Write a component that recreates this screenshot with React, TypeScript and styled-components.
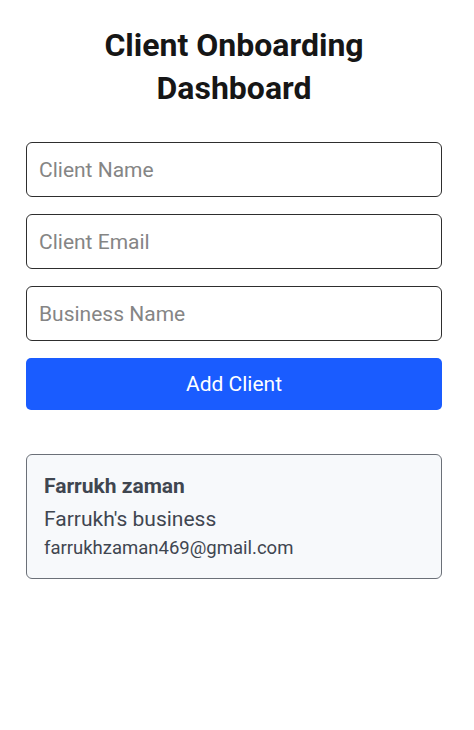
import styled, { createGlobalStyle } from 'styled-components'

const GlobalStyle = createGlobalStyle`
  body {
    margin: 0;
    background: #ffffff;
    font-family: Roboto, "Noto Sans", Arial, sans-serif;
  }
`

type Client = {
  name: string
  business: string
  email: string
}

const clients: Client[] = [
  { name: 'Farrukh zaman', business: "Farrukh's business", email: 'farrukhzaman469@gmail.com' },
]

export default function App() {
  return (
    <>
      <GlobalStyle />
      <Page>
        <Title>Client Onboarding Dashboard</Title>
        <Form onSubmit={(e) => e.preventDefault()}>
          <Field placeholder="Client Name" />
          <Field placeholder="Client Email" />
          <Field placeholder="Business Name" />
          <SubmitButton type="submit">Add Client</SubmitButton>
        </Form>
        <ClientList>
          {clients.map((c) => (
            <ClientCard key={c.email}>
              <ClientName>{c.name}</ClientName>
              <ClientBusiness>{c.business}</ClientBusiness>
              <ClientEmail>{c.email}</ClientEmail>
            </ClientCard>
          ))}
        </ClientList>
      </Page>
    </>
  )
}

const Page = styled.div`
  padding: 24px 32px 40px 26px;
  display: flex;
  flex-direction: column;
`

const Title = styled.h1`
  margin: 0 auto 32px;
  max-width: 320px;
  text-align: center;
  font-size: 32px;
  line-height: 43px;
  font-weight: 700;
  color: #161616;
`

const Form = styled.form`
  display: flex;
  flex-direction: column;
  gap: 17px;
`

const Field = styled.input`
  box-sizing: border-box;
  width: 100%;
  height: 55px;
  padding: 0 12px;
  border: 1.5px solid #2e2e2e;
  border-radius: 6px;
  font-family: Roboto, sans-serif;
  font-size: 21px;
  color: #222;
  outline: none;

  &::placeholder {
    color: #858585;
  }
`

const SubmitButton = styled.button`
  height: 52px;
  border: none;
  border-radius: 5px;
  background: #1a5cff;
  color: #ffffff;
  font-family: Roboto, sans-serif;
  font-size: 21px;
  cursor: pointer;
`

const ClientList = styled.div`
  margin-top: 44px;
  display: flex;
  flex-direction: column;
  gap: 16px;
`

const ClientCard = styled.div`
  box-sizing: border-box;
  padding: 16px 17px 18px;
  background: #f7f9fb;
  border: 1.5px solid #6b7078;
  border-radius: 6px;
  color: #3f4650;
`

const ClientName = styled.div`
  font-size: 21px;
  font-weight: 700;
  line-height: 31px;
`

const ClientBusiness = styled.div`
  font-size: 21px;
  line-height: 34px;
`

const ClientEmail = styled.div`
  font-size: 18.5px;
  line-height: 24px;
`
